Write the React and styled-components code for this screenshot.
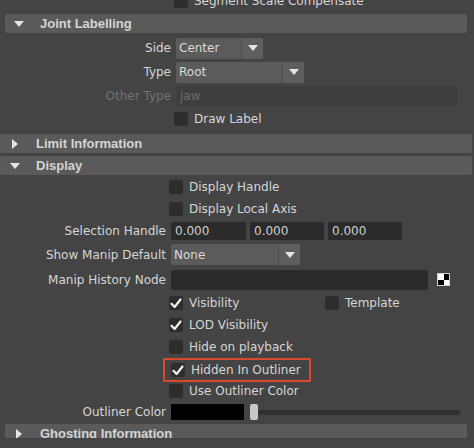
import { createGlobalStyle } from "styled-components";
import styled from "styled-components";

const Global = createGlobalStyle`
  html, body {
    margin: 0;
    padding: 0;
    background: #444444;
    overflow: hidden;
  }
  body {
    font-family: "DejaVu Sans", "Liberation Sans", sans-serif;
    font-size: 12px;
    color: #d6d6d6;
  }
`;

const Panel = styled.div`
  width: 474px;
  height: 448px;
  margin-top: -10px;
  display: flex;
  flex-direction: column;
  background: #444444;
`;

const Section = styled.div`
  display: flex;
  flex-direction: column;
  padding: 0 ${(p) => (p.$nested ? 7 : 2)}px 0 ${(p) => (p.$nested ? 5 : 0)}px;
  margin-top: ${(p) => p.$top || 0}px;
`;

const Header = styled.div`
  height: 19px;
  display: flex;
  align-items: center;
  background: #5a5a5a;
  border-radius: 2px;
  font-family: "Liberation Sans", "DejaVu Sans", sans-serif;
  font-weight: bold;
  font-size: 13px;
  color: #d4d4d4;
  padding-left: ${(p) => (p.$nested ? 9 : 10)}px;
`;

const Arrow = styled.span`
  width: 10px;
  height: 10px;
  display: flex;
  align-items: center;
  justify-content: center;
  margin-right: 16px;
`;

const Body = styled.div`
  display: flex;
  flex-direction: column;
  padding: ${(p) => p.$pad || "0"};
`;

const Row = styled.div`
  height: ${(p) => p.$h || 22}px;
  display: grid;
  grid-template-columns: 166px 1fr;
  column-gap: 5px;
  align-items: center;
`;

const Label = styled.span`
  text-align: right;
  white-space: nowrap;
  color: ${(p) => (p.$dim ? "#727272" : "#d6d6d6")};
`;

const Cell = styled.div`
  display: flex;
  align-items: center;
  gap: ${(p) => p.$gap || 0}px;
`;

const Combo = styled.div`
  display: flex;
  height: 21px;
  width: ${(p) => p.$w}px;
  background: #5b5b5b;
  border-radius: 2px;
`;

const ComboText = styled.span`
  flex: 1;
  display: flex;
  align-items: center;
  padding-left: 3px;
  color: #dadada;
`;

const ComboButton = styled.span`
  width: 21px;
  display: flex;
  align-items: center;
  justify-content: center;
  border-left: 1px solid #4c4c4c;
  background: #5e5e5e;
`;

const Field = styled.div`
  height: ${(p) => p.$h || 18}px;
  width: ${(p) => p.$w}px;
  display: flex;
  align-items: center;
  padding-left: 4px;
  box-sizing: border-box;
  background: ${(p) => (p.$dim ? "#3e3e3e" : "#2b2b2b")};
  color: ${(p) => (p.$dim ? "#6c6c6c" : "#cfcfcf")};
  border-radius: 1px;
`;

const CheckWrap = styled.label`
  display: flex;
  align-items: center;
  gap: 6px;
  white-space: nowrap;
  padding: ${(p) => (p.$flag ? "3px 8px 3px 6px" : "0")};
  margin-left: ${(p) => (p.$flag ? "-8px" : "-2px")};
  border: ${(p) => (p.$flag ? "2px solid #d8492e" : "none")};
  border-radius: 1px;
`;

const Box = styled.span`
  width: 14px;
  height: 14px;
  flex-shrink: 0;
  background: #2d2d2d;
  border-radius: 2px;
  display: flex;
  align-items: center;
  justify-content: center;
`;

const CheckPair = styled.div`
  display: grid;
  grid-template-columns: 156px auto;
  align-items: center;
`;

const Swatch = styled.div`
  width: 73px;
  height: 16px;
  background: #000;
`;

const Slider = styled.div`
  flex: 1;
  display: flex;
  align-items: center;
  margin-right: 12px;
  margin-left: 6px;
`;

const Thumb = styled.span`
  width: 8px;
  height: 16px;
  background: #c8c8c8;
  border-radius: 2px;
  flex-shrink: 0;
`;

const Track = styled.span`
  flex: 1;
  height: 5px;
  background: #2f2f2f;
  border-radius: 3px;
`;

const Checker = styled.span`
  width: 11px;
  height: 11px;
  margin-left: 9px;
  border: 1px solid #cfcfcf;
  display: grid;
  grid-template-columns: 1fr 1fr;
  background: #fff;
  & i:nth-child(2), & i:nth-child(3) {
    background: #000;
  }
`;

function Down() {
  return (
    <svg width="10" height="6" viewBox="0 0 10 6">
      <path d="M0 0H10L5 6Z" fill="#e4e4e4" />
    </svg>
  );
}

function Right() {
  return (
    <svg width="6" height="10" viewBox="0 0 6 10">
      <path d="M0 0V10L6 5Z" fill="#e4e4e4" />
    </svg>
  );
}

function Tick() {
  return (
    <svg width="12" height="11" viewBox="0 0 12 11">
      <path d="M1.5 5.8L4.6 9L10.5 1.5" stroke="#f2f2f2" strokeWidth="2.2" fill="none" strokeLinecap="round" strokeLinejoin="round" />
    </svg>
  );
}

function Check({ on, text, flag }) {
  return (
    <CheckWrap $flag={flag}>
      <Box>{on && <Tick />}</Box>
      <span>{text}</span>
    </CheckWrap>
  );
}

function Select({ value, width }) {
  return (
    <Combo $w={width}>
      <ComboText>{value}</ComboText>
      <ComboButton>
        <Down />
      </ComboButton>
    </Combo>
  );
}

export default function App() {
  return (
    <>
      <Global />
      <Panel>
        <Section $nested>
          <Row>
            <span />
            <Cell>
              <Check text="Segment Scale Compensate" />
            </Cell>
          </Row>
        </Section>

        <Section $nested $top={2}>
          <Header $nested>
            <Arrow><Down /></Arrow>
            Joint Labelling
          </Header>
          <Body $pad="3px 0 4px 0">
            <Row $h={24}>
              <Label>Side</Label>
              <Cell><Select value="Center" width={87} /></Cell>
            </Row>
            <Row $h={24}>
              <Label>Type</Label>
              <Cell><Select value="Root" width={128} /></Cell>
            </Row>
            <Row $h={24}>
              <Label $dim>Other Type</Label>
              <Cell><Field $dim $w={281} $h={20}>jaw</Field></Cell>
            </Row>
            <Row>
              <span />
              <Cell><Check text="Draw Label" /></Cell>
            </Row>
          </Body>
        </Section>

        <Section>
          <Header>
            <Arrow><Right /></Arrow>
            Limit Information
          </Header>
        </Section>

        <Section $top={3}>
          <Header>
            <Arrow><Down /></Arrow>
            Display
          </Header>
          <Body $pad="1px 0 0 0">
            <Row>
              <span />
              <Cell><Check text="Display Handle" /></Cell>
            </Row>
            <Row>
              <span />
              <Cell><Check text="Display Local Axis" /></Cell>
            </Row>
            <Row>
              <Label>Selection Handle</Label>
              <Cell $gap={4}>
                <Field $w={75}>0.000</Field>
                <Field $w={74}>0.000</Field>
                <Field $w={74}>0.000</Field>
              </Cell>
            </Row>
            <Row $h={25}>
              <Label>Show Manip Default</Label>
              <Cell><Select value="None" width={129} /></Cell>
            </Row>
            <Row $h={25}>
              <Label>Manip History Node</Label>
              <Cell>
                <Field $w={257} $h={20} />
                <Checker><i /><i /><i /><i /></Checker>
              </Cell>
            </Row>
            <Row>
              <span />
              <CheckPair>
                <Check on text="Visibility" />
                <Check text="Template" />
              </CheckPair>
            </Row>
            <Row>
              <span />
              <Cell><Check on text="LOD Visibility" /></Cell>
            </Row>
            <Row>
              <span />
              <Cell><Check text="Hide on playback" /></Cell>
            </Row>
            <Row>
              <span />
              <Cell><Check on flag text="Hidden In Outliner" /></Cell>
            </Row>
            <Row>
              <span />
              <Cell><Check text="Use Outliner Color" /></Cell>
            </Row>
            <Row $h={20}>
              <Label>Outliner Color</Label>
              <Cell>
                <Swatch />
                <Slider>
                  <Thumb />
                  <Track />
                </Slider>
              </Cell>
            </Row>
          </Body>
        </Section>

        <Section $nested $top={2}>
          <Header $nested>
            <Arrow><Right /></Arrow>
            Ghosting Information
          </Header>
        </Section>
      </Panel>
    </>
  );
}
